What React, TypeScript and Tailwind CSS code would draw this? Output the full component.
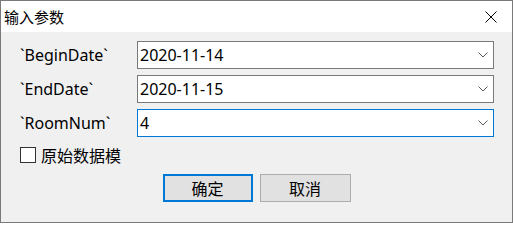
import React from "react";

type Field = { label: string; value: string; focused?: boolean };

const fields: Field[] = [
  { label: "`BeginDate`", value: "2020-11-14" },
  { label: "`EndDate`", value: "2020-11-15" },
  { label: "`RoomNum`", value: "4", focused: true },
];

function Chevron() {
  return (
    <svg width="10" height="6" viewBox="0 0 10 6" className="absolute right-[5px] top-1/2 -translate-y-1/2">
      <path d="M0.5 0.5 L5 5 L9.5 0.5" fill="none" stroke="#5a5a5a" strokeWidth="1" />
    </svg>
  );
}

function Combo({ value, focused }: { value: string; focused?: boolean }) {
  return (
    <div
      className={`relative w-[357px] h-[28px] bg-white border flex items-center pl-[2px] ${
        focused ? "border-[#0078d7]" : "border-[#7a7a7a]"
      }`}
    >
      <span className="text-[16px] leading-none text-black">{value}</span>
      <Chevron />
    </div>
  );
}

export default function App() {
  return (
    <div
      className="w-[513px] h-[223px] border border-[#7a7a7a] bg-[#f0f0f0] flex flex-col overflow-hidden text-black"
      style={{ fontFamily: "'Noto Sans', 'Noto Sans CJK SC', sans-serif" }}
    >
      <div className="h-[31px] bg-white flex items-center justify-between pl-[3px] pr-[15px]">
        <span className="text-[15px] leading-none" style={{ fontFamily: "'Noto Sans CJK SC', sans-serif" }}>
          输入参数
        </span>
        <svg width="12" height="12" viewBox="0 0 12 12">
          <path d="M0.5 0.5 L11.5 11.5 M11.5 0.5 L0.5 11.5" stroke="#000" strokeWidth="1" />
        </svg>
      </div>

      <div className="flex flex-col pt-[9px] pl-[19px]">
        <div className="flex flex-col gap-[6px]">
          {fields.map((f) => (
            <div key={f.label} className="flex items-center">
              <span className="w-[117px] text-[16px] leading-none">{f.label}</span>
              <Combo value={f.value} focused={f.focused} />
            </div>
          ))}
        </div>

        <div className="mt-[10px] h-[15px] flex items-center gap-[5px]">
          <div className="w-[16px] h-[16px] bg-white border border-[#333333]" />
          <span
            className="whitespace-nowrap text-[16px] leading-[16px]"
            style={{ fontFamily: "'Noto Sans CJK SC', sans-serif" }}
          >
            原始数据模
          </span>
        </div>
      </div>

      <div className="mt-[12px] flex justify-center gap-[7px]" style={{ fontFamily: "'Noto Sans CJK SC', sans-serif" }}>
        <button type="button" className="w-[90px] h-[28px] bg-[#e1e1e1] border-2 border-[#0078d7] text-[16px] leading-none">
          确定
        </button>
        <button type="button" className="w-[91px] h-[28px] bg-[#e1e1e1] border border-[#adadad] text-[16px] leading-none">
          取消
        </button>
      </div>
    </div>
  );
}
